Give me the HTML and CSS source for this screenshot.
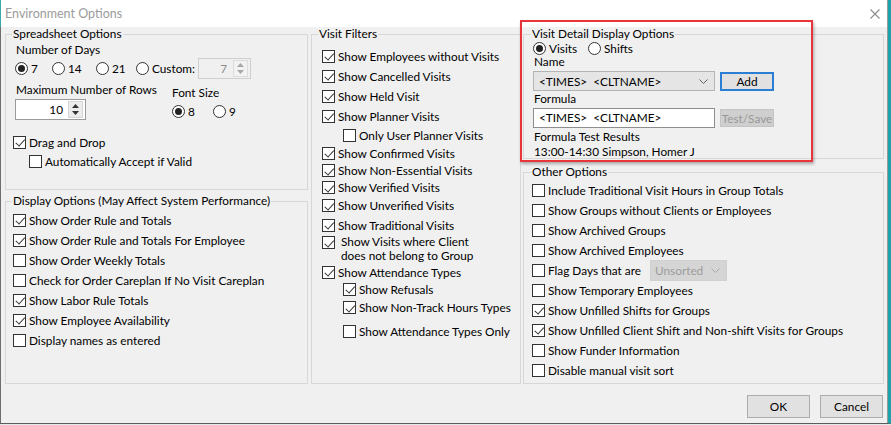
FILE: index.html
```html
<!DOCTYPE html>
<html>
<head>
<meta charset="utf-8">
<link rel="stylesheet" href="styles.css">
</head>
<body>
<div class="window">
  <div class="titlebar">
    <span class="title">Environment Options</span>
    <svg class="close" width="10" height="10" viewBox="0 0 10 10"><path d="M0.5 0.5L9.5 9.5M9.5 0.5L0.5 9.5" stroke="#8a8a8a" stroke-width="1.1" fill="none"/></svg>
  </div>
  <div class="main">
    <div class="groups">
      <div class="col col1">
        <fieldset class="grp g-sheet">
          <legend>Spreadsheet Options</legend>
          <div class="sheet">
            <div class="lbl nod">Number of Days</div>
            <div class="days">
              <span class="ritem w37"><span class="rb on"></span><span>7</span></span>
              <span class="ritem w44"><span class="rb"></span><span>14</span></span>
              <span class="ritem w40"><span class="rb"></span><span>21</span></span>
              <span class="ritem w62"><span class="rb"></span><span>Custom:</span></span>
              <span class="spin dis"><span class="spin-val">7</span><span class="spin-btns"><svg width="7" height="4" viewBox="0 0 7 4"><path d="M0 4L3.5 0L7 4Z"/></svg><svg width="7" height="4" viewBox="0 0 7 4"><path d="M0 0L3.5 4L7 0Z"/></svg></span></span>
            </div>
            <div class="rowsfont">
              <div class="rows-col">
                <div class="lbl">Maximum Number of Rows</div>
                <span class="spin en"><span class="spin-val">10</span><span class="spin-btns"><svg width="7" height="4" viewBox="0 0 7 4"><path d="M0 4L3.5 0L7 4Z"/></svg><svg width="7" height="4" viewBox="0 0 7 4"><path d="M0 0L3.5 4L7 0Z"/></svg></span></span>
              </div>
              <div class="font-col">
                <div class="lbl">Font Size</div>
                <div class="fontr">
                  <span class="ritem w41"><span class="rb on"></span><span>8</span></span>
                  <span class="ritem"><span class="rb"></span><span>9</span></span>
                </div>
              </div>
            </div>
            <div class="row drag"><span class="cb on"></span><span>Drag and Drop</span></div>
            <div class="row auto"><span class="cb"></span><span>Automatically Accept if Valid</span></div>
          </div>
        </fieldset>
        <fieldset class="grp g-display">
          <legend>Display Options (May Affect System Performance)</legend>
          <div class="list list-display">
            <div class="row"><span class="cb on"></span><span>Show Order Rule and Totals</span></div>
            <div class="row"><span class="cb on"></span><span>Show Order Rule and Totals For Employee</span></div>
            <div class="row"><span class="cb"></span><span>Show Order Weekly Totals</span></div>
            <div class="row"><span class="cb"></span><span>Check for Order Careplan If No Visit Careplan</span></div>
            <div class="row"><span class="cb on"></span><span>Show Labor Rule Totals</span></div>
            <div class="row"><span class="cb on"></span><span>Show Employee Availability</span></div>
            <div class="row"><span class="cb"></span><span>Display names as entered</span></div>
          </div>
        </fieldset>
      </div>
      <fieldset class="grp g-filters">
        <legend>Visit Filters</legend>
        <div class="list list-filters">
          <div class="row"><span class="cb on"></span><span>Show Employees without Visits</span></div>
          <div class="row"><span class="cb on"></span><span>Show Cancelled Visits</span></div>
          <div class="row"><span class="cb on"></span><span>Show Held Visit</span></div>
          <div class="row"><span class="cb on"></span><span>Show Planner Visits</span></div>
          <div class="row h18 ind"><span class="cb"></span><span>Only User Planner Visits</span></div>
          <div class="row h18"><span class="cb on"></span><span>Show Confirmed Visits</span></div>
          <div class="row h17"><span class="cb on"></span><span>Show Non-Essential Visits</span></div>
          <div class="row h17"><span class="cb on"></span><span>Show Verified Visits</span></div>
          <div class="row h19"><span class="cb on"></span><span>Show Unverified Visits</span></div>
          <div class="row"><span class="cb on"></span><span>Show Traditional Visits</span></div>
          <div class="row two"><span class="cb on"></span><span class="twotext"><span class="ln">Show Visits where Client</span><span class="ln">does not belong to Group</span></span></div>
          <div class="row h16"><span class="cb on"></span><span>Show Attendance Types</span></div>
          <div class="row h18 ind"><span class="cb on"></span><span>Show Refusals</span></div>
          <div class="row h19 ind"><span class="cb on"></span><span>Show Non-Track Hours Types</span></div>
          <div class="row ind gap4"><span class="cb"></span><span>Show Attendance Types Only</span></div>
        </div>
      </fieldset>
      <div class="col col3">
        <fieldset class="grp g-detail">
          <legend>Visit Detail Display Options</legend>
          <div class="detail">
            <div class="vs">
              <span class="ritem w55"><span class="rb on"></span><span>Visits</span></span>
              <span class="ritem"><span class="rb"></span><span>Shifts</span></span>
            </div>
            <div class="lbl dl">Name</div>
            <div class="ctrlrow">
              <span class="combo"><span>&lt;TIMES&gt;&nbsp; &lt;CLTNAME&gt;</span><svg width="9" height="5" viewBox="0 0 9 5"><path d="M0.5 0.5L4.5 4.5L8.5 0.5" stroke="#606060" fill="none"/></svg></span>
              <button class="btn add">Add</button>
            </div>
            <div class="lbl dl f">Formula</div>
            <div class="ctrlrow">
              <span class="textbox">&lt;TIMES&gt;&nbsp; &lt;CLTNAME&gt;</span>
              <button class="btn test">Test/Save</button>
            </div>
            <div class="lbl dl r1">Formula Test Results</div>
            <div class="lbl dl r2">13:00-14:30 Simpson, Homer J</div>
          </div>
        </fieldset>
        <fieldset class="grp g-other">
          <legend>Other Options</legend>
          <div class="list list-other">
            <div class="row"><span class="cb"></span><span>Include Traditional Visit Hours in Group Totals</span></div>
            <div class="row"><span class="cb"></span><span>Show Groups without Clients or Employees</span></div>
            <div class="row"><span class="cb"></span><span>Show Archived Groups</span></div>
            <div class="row"><span class="cb"></span><span>Show Archived Employees</span></div>
            <div class="row"><span class="cb"></span><span>Flag Days that are</span><span class="combo dis"><span>Unsorted</span><svg width="9" height="5" viewBox="0 0 9 5"><path d="M0.5 0.5L4.5 4.5L8.5 0.5" stroke="#a8a8a8" fill="none"/></svg></span></div>
            <div class="row"><span class="cb"></span><span>Show Temporary Employees</span></div>
            <div class="row"><span class="cb on"></span><span>Show Unfilled Shifts for Groups</span></div>
            <div class="row"><span class="cb on"></span><span>Show Unfilled Client Shift and Non-shift Visits for Groups</span></div>
            <div class="row"><span class="cb"></span><span>Show Funder Information</span></div>
            <div class="row"><span class="cb"></span><span>Disable manual visit sort</span></div>
          </div>
        </fieldset>
      </div>
    </div>
    <div class="buttons">
      <button class="btn dlg">OK</button>
      <button class="btn dlg">Cancel</button>
    </div>
  </div>
  <div class="highlight"></div>
</div>
</body>
</html>
```
FILE: styles.css
```css
* { box-sizing: border-box; }
html, body { margin: 0; padding: 0; }
body {
  width: 891px; height: 425px; overflow: hidden;
  background: #e8e8e8;
  font-family: Lato, "Noto Sans", sans-serif;
  font-size: 11.8px; color: #000;
}
.window {
  position: relative;
  width: 891px; height: 424px;
  background: #f0f0f0;
  border-right: 3px solid #1fa3ab;
  border-bottom: 1px solid #5c5c5c;
  display: flex; flex-direction: column;
}
.titlebar {
  height: 27px; flex: none;
  background: #fff;
  border-left: 1px solid #3aa9ae;
  border-right: 1px solid #9a9a9a;
  display: flex; align-items: center; justify-content: space-between;
  padding: 0 7px 0 4px;
}
.title { color: #9b9b9b; font-size: 12.5px; }
.close { display: block; margin-top: 1px; }
.main {
  flex: 1; display: flex; flex-direction: column;
  border-left: 1px solid #6e6e6e;
  border-right: 1px solid #9a9a9a;
}
.groups { display: flex; height: 357px; padding-left: 4px; }
.col { display: flex; flex-direction: column; }
.col1 { width: 303px; gap: 4px; }
.col3 { width: 361px; margin-left: 2px; gap: 6px; }

.grp {
  margin: 0; padding: 0; min-width: 0;
  border: 1px solid #d7d7d7;
}
.grp > legend {
  padding: 0 1px; margin-left: 6px;
  line-height: 14px; font-size: 11.8px; color: #000;
}
.g-sheet { height: 163px; }
.g-display { height: 190px; }
.g-filters { width: 210px; height: 357px; margin-left: 3px; }
.g-detail { height: 132px; }
.g-detail > legend, .g-other > legend { margin-left: 7px; }
.g-other { height: 219px; }

.lbl { line-height: 14px; }
.row { display: flex; align-items: center; height: 20px; white-space: nowrap; }
.cb {
  flex: none; position: relative;
  width: 13px; height: 13px; margin-right: 3px;
  border: 1px solid #333; background: #fff;
}
.cb.on::after {
  content: ""; position: absolute;
  left: 3.5px; top: 0.5px; width: 3.5px; height: 7.5px;
  border: solid #333; border-width: 0 1.3px 1.3px 0;
  transform: rotate(42deg);
}
.ritem { display: inline-flex; align-items: center; white-space: nowrap; }
.rb {
  flex: none; width: 13px; height: 13px; margin-right: 3px;
  border: 1px solid #333; border-radius: 50%; background: #fff;
  display: inline-flex; align-items: center; justify-content: center;
}
.rb.on::after { content: ""; width: 7px; height: 7px; border-radius: 50%; background: #222; }
.w37 { width: 37px; } .w40 { width: 40px; } .w41 { width: 41px; }
.w44 { width: 44px; } .w55 { width: 55px; } .w62 { width: 62px; }

/* spreadsheet */
.sheet { padding-left: 9px; }
.nod { margin: 2px 0 0 1px; }
.days { display: flex; align-items: center; height: 23px; }
.spin {
  display: inline-flex; align-items: stretch; height: 21px;
}
.spin.dis { width: 53px; border: 1px solid #cfcfcf; background: #f0f0f0; margin-left: 0; }
.spin.en { width: 71px; border: 1px solid #9a9a9a; background: #fff; margin-top: 2px; }
.spin-val { flex: 1; text-align: right; padding-right: 5px; line-height: 19px; }
.spin.dis .spin-val { color: #8c8c8c; padding-right: 6px; }
.spin-btns {
  width: 15px; margin: 1px 2px 1px 0; display: flex; flex-direction: column;
  justify-content: space-around; align-items: center;
  border: 1px solid #d6d6d6; background: #ececec;
}
.spin.dis .spin-btns { background: #f2f2f2; border-color: #dcdcdc; }
.spin-btns svg { display: block; fill: #333; }
.spin.dis .spin-btns svg { fill: #a8a8a8; }
.rowsfont { display: flex; }
.rows-col { width: 157px; padding-top: 3px; }
.rows-col .lbl { margin-left: 1px; }
.font-col { padding-top: 6px; }
.fontr { display: flex; height: 14px; align-items: center; margin-top: 4px; }
.row.drag { margin: 14px 0 0 -2px; height: 16px; }
.row.auto { margin: 3px 0 0 14px; height: 16px; }

/* lists */
.list-display { padding: 2px 0 0 7px; }
.list-filters { padding: 5px 0 0 10px; }
.list-other { padding: 1px 0 0 8px; }
.row.ind { padding-left: 21px; }
.h16 { height: 16px; } .h17 { height: 17px; } .h18 { height: 18px; } .h19 { height: 19px; }
.row.gap4 { margin-top: 4px; }
.row.two { height: 29px; align-items: flex-start; }
.row.two .cb { margin-top: 1px; }
.twotext { display: flex; flex-direction: column; margin-left: 3px; }
.twotext .ln { display: block; height: 14px; line-height: 14px; }

/* detail */
.detail { padding-left: 9px; }
.vs { display: flex; height: 14px; align-items: center; }
.dl { margin-left: 1px; }
.ctrlrow { display: flex; align-items: center; margin-top: 2px; }
.dl.f { margin-top: 1px; }
.combo {
  width: 182px; height: 20px; padding: 0 6px 0 5px;
  display: inline-flex; align-items: center; justify-content: space-between;
  background: #e5e5e5; border: 1px solid #b4b4b4; white-space: nowrap;
}
.combo.dis {
  width: 77px; height: 21px; margin-left: 9px; padding: 0 6px 0 4px;
  background: #d5d5d5; border-color: #d0d0d0; color: #9c9c9c;
}
.textbox {
  width: 182px; height: 20px; padding-left: 5px; line-height: 18px;
  background: #fff; border: 1px solid #8e8e8e; white-space: nowrap;
}
.btn {
  font-family: inherit; font-size: 11.8px; color: #000;
  background: #e1e1e1; border: 1px solid #adadad; padding: 0; margin: 0;
}
.btn.add { width: 54px; height: 19px; margin-left: 5px; border: 2px solid #2a7fd4; }
.btn.test { width: 54px; height: 18px; margin-left: 5px; background: #cfcfcf; border-color: #c4c4c4; color: #999; }
.dl.r1 { margin-top: 2px; }
.dl.r2 { margin-top: 1px; }

/* buttons */
.buttons { display: flex; justify-content: flex-end; gap: 10px; margin-top: 11px; padding-right: 4px; }
.btn.dlg { width: 63px; height: 23px; }

.highlight {
  position: absolute; left: 520px; top: 20px; width: 293px; height: 142px;
  border: 2px solid #e8353b;
  box-shadow: 1px 2px 3px rgba(0,0,0,0.3);
  pointer-events: none;
}
```
